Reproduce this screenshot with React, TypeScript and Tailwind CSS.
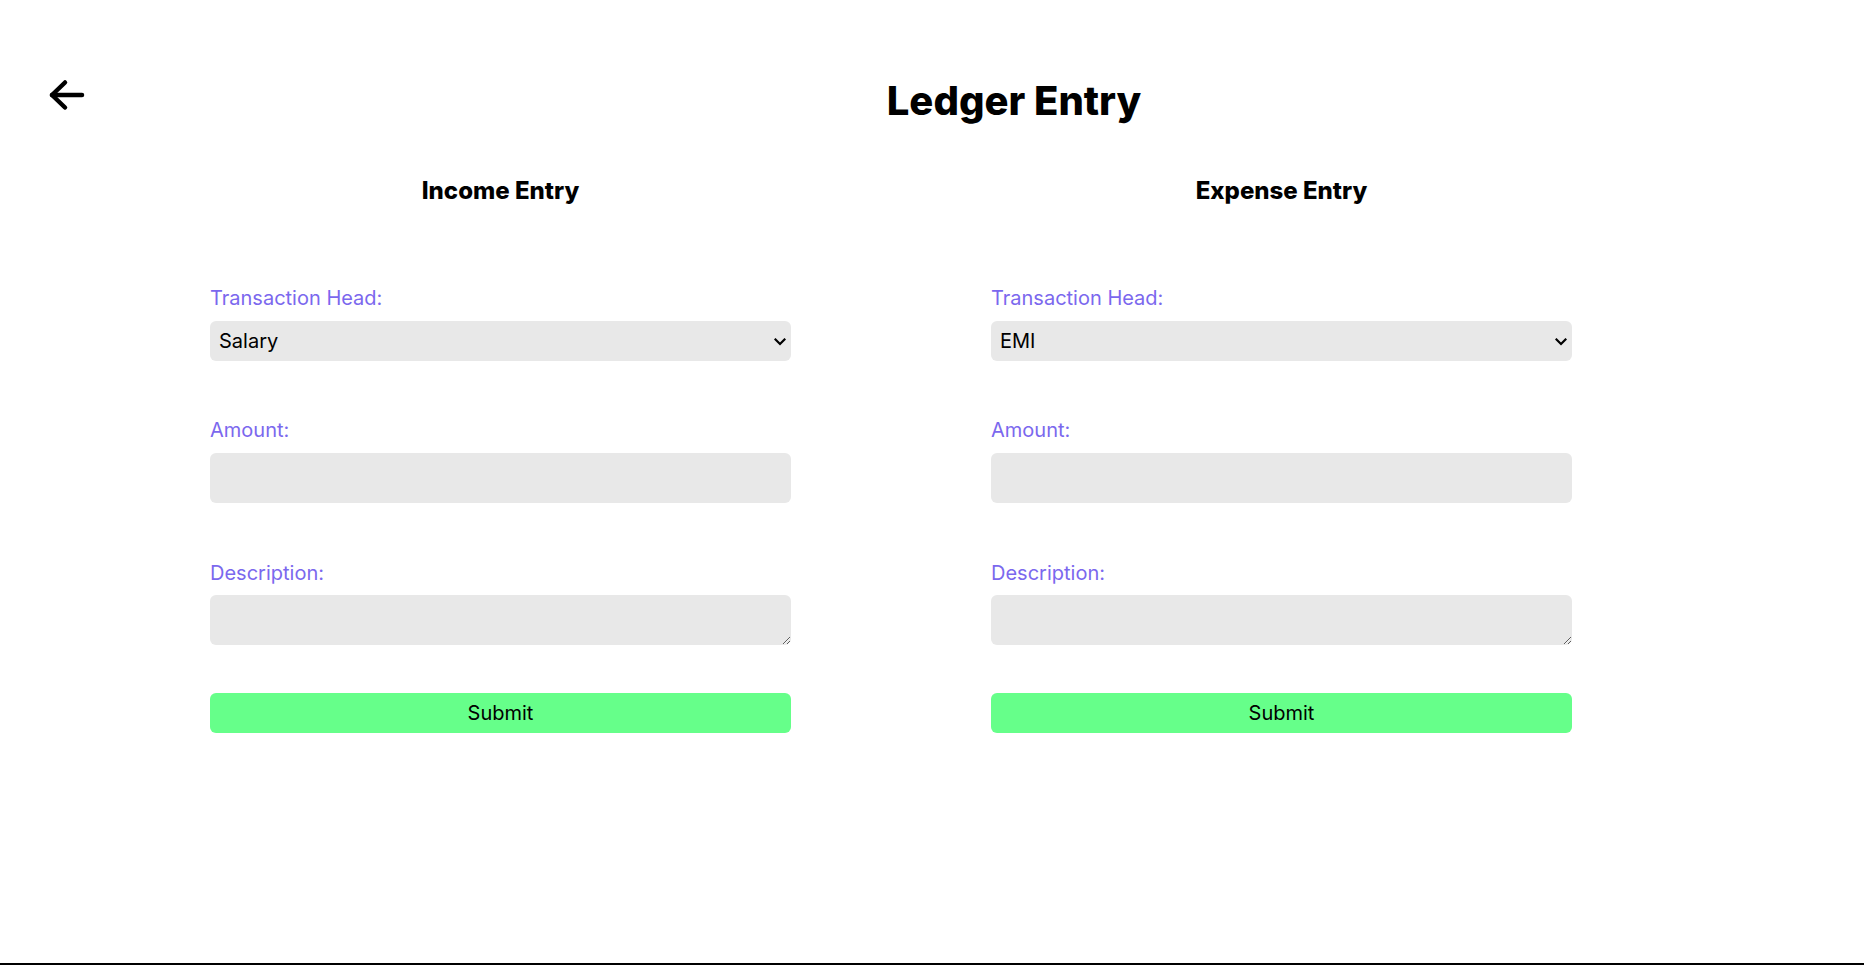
import { useState } from 'react'

const INCOME_HEADS = ['Salary', 'Business', 'Interest', 'Rent', 'Other']
const EXPENSE_HEADS = ['EMI', 'Rent', 'Groceries', 'Utilities', 'Other']

function BackArrow() {
  return (
    <svg width="40" height="40" viewBox="0 0 40 40" fill="none" className="ml-[47px] shrink-0">
      <path d="M18 7.5 L5 20 L18 32.5" stroke="#000" strokeWidth="4.5" strokeLinecap="round" strokeLinejoin="round" />
      <path d="M5 20 H35" stroke="#000" strokeWidth="4.5" strokeLinecap="round" />
    </svg>
  )
}

function EntryForm({ title, heads }: { title: string; heads: string[] }) {
  const [head, setHead] = useState(heads[0])
  const [amount, setAmount] = useState('')
  const [desc, setDesc] = useState('')

  return (
    <form className="w-[581px] flex flex-col" onSubmit={e => e.preventDefault()}>
      <h2 className="text-[24px] leading-[29px] font-extrabold text-center text-black">{title}</h2>

      <label className="mt-[81px] mb-[11px] block text-[20px] leading-[24px] text-[#7b68ee]">Transaction Head:</label>
      <div className="relative">
        <select value={head} onChange={e => setHead(e.target.value)}
          className="appearance-none w-full h-[40px] rounded-[6px] bg-[#e8e8e8] pl-[9px] pr-8 text-[20px] text-black outline-none">
          {heads.map(h => <option key={h}>{h}</option>)}
        </select>
        <svg width="12" height="8" viewBox="0 0 12 8" fill="none" className="absolute right-[5px] top-[17px] pointer-events-none">
          <path d="M1.5 1.5 L6 6 L10.5 1.5" stroke="#000" strokeWidth="2.2" strokeLinecap="square" />
        </svg>
      </div>

      <label className="mt-[57px] mb-[11px] block text-[20px] leading-[24px] text-[#7b68ee]">Amount:</label>
      <input type="number" value={amount} onChange={e => setAmount(e.target.value)}
        className="block w-full h-[50px] rounded-[6px] bg-[#e8e8e8] px-[10px] text-[20px] outline-none" />

      <label className="mt-[58px] mb-[10px] block text-[20px] leading-[24px] text-[#7b68ee]">Description:</label>
      <textarea value={desc} onChange={e => setDesc(e.target.value)}
        className="block w-full h-[50px] rounded-[6px] bg-[#e8e8e8] px-[10px] text-[20px] outline-none" />

      <button type="submit"
        className="mt-[48px] h-[40px] w-full rounded-[6px] bg-[#66ff8a] text-[20px] leading-[24px] text-black">
        Submit
      </button>
    </form>
  )
}

export default function App() {
  return (
    <div className="h-[965px] bg-white border-b-2 border-black flex flex-col font-['Inter',sans-serif] text-black">
      {/* header */}
      <div className="flex items-start pt-[75px]">
        <BackArrow />
        <h1 className="flex-1 mt-[2px] pl-[77px] text-center text-[40px] leading-[48px] font-extrabold">
          Ledger Entry
        </h1>
      </div>

      {/* forms */}
      <div className="flex gap-[200px] pl-[210px] mt-[51px]">
        <EntryForm title="Income Entry" heads={INCOME_HEADS} />
        <EntryForm title="Expense Entry" heads={EXPENSE_HEADS} />
      </div>
    </div>
  )
}
